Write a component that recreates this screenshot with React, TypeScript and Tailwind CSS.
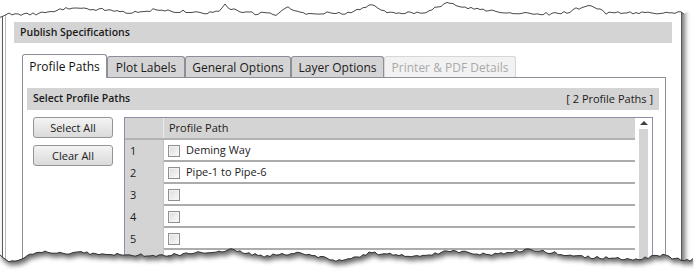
import React from "react";

const rand = (i: number, s: number) => {
  const x = Math.sin(i * 12.9898 + s * 78.233) * 43758.5453;
  return x - Math.floor(x);
};

function tornLine(ctrl: [number, number][], seed: number, amp: number, dy = 0) {
  const pts: [number, number][] = [];
  for (let x = 0; x <= 694; x += 3) {
    let k = 0;
    while (k < ctrl.length - 2 && ctrl[k + 1][0] < x) k++;
    const [x0, y0] = ctrl[k];
    const [x1, y1] = ctrl[k + 1];
    const t = Math.min(1, Math.max(0, (x - x0) / (x1 - x0 || 1)));
    const y = y0 + (y1 - y0) * t + (rand(x, seed) - 0.5) * amp - dy;
    pts.push([x, Math.round(y * 10) / 10]);
  }
  return pts;
}

const topCtrl: [number, number][] = [
  [0, 18], [4, 14], [20, 15], [45, 13], [65, 8], [100, 9], [125, 13], [150, 10], [190, 12], [215, 13], [225, 5], [240, 13], [278, 14], [288, 7], [300, 13], [350, 13], [372, 5], [390, 13], [425, 12], [447, 3], [480, 10], [510, 13], [560, 14], [590, 5], [605, 13], [683, 13], [694, 13],
];
const botCtrl: [number, number][] = [
  [0, 256], [12, 262], [40, 252], [120, 254], [160, 256], [200, 253], [230, 250], [260, 256], [300, 253], [340, 261], [370, 253], [420, 257], [450, 251], [490, 255], [530, 249], [560, 254], [600, 258], [640, 259], [660, 255], [684, 260], [694, 260],
];

function TopTear() {
  const pts = tornLine(topCtrl, 3, 3);
  const line = pts.filter(([x]) => x <= 684).map(([x, y]) => `${x},${y}`).join(" ");
  const fill = `M0,0 L694,0 L694,${pts[pts.length - 1][1]} ` + pts.slice().reverse().map(([x, y]) => `L${x},${y}`).join(" ") + " Z";
  return (
    <svg className="absolute left-0 top-0" width="694" height="24" viewBox="0 0 694 24">
      <path d={fill} fill="#ffffff" />
      <polyline points={line} fill="none" stroke="#4a4a4a" strokeWidth="1" />
    </svg>
  );
}

function BottomTear() {
  const off = 236;
  const pts = tornLine(botCtrl, 7, 3, off);
  const edge = pts.map(([x, y]) => `L${x},${y}`).join(" ");
  const below = `M0,38 L0,${pts[0][1]} ${edge} L694,38 Z`;
  const above = `M0,-20 L0,${pts[0][1]} ${edge} L694,-20 Z`;
  return (
    <svg className="absolute left-0 top-[236px]" width="694" height="38" viewBox="0 0 694 38">
      <defs>
        <clipPath id="belowClip">
          <path d={below} />
        </clipPath>
        <filter id="blur" x="-5%" y="-50%" width="110%" height="200%">
          <feGaussianBlur stdDeviation="2.6" />
        </filter>
      </defs>
      <path d={below} fill="#ffffff" />
      <g clipPath="url(#belowClip)">
        <path d={above} fill="#000" opacity="0.6" filter="url(#blur)" transform="translate(2,4)" />
      </g>
      <polyline points={pts.map(([x, y]) => `${x},${y}`).join(" ")} fill="none" stroke="#333" strokeWidth="1" />
    </svg>
  );
}

function Checkbox() {
  return <span className="block h-[12px] w-[12px] border border-[#8f8f8f] bg-gradient-to-br from-[#dcdcdc] to-[#fbfbfb] shadow-[inset_0_0_0_1px_#f4f4f4]" />;
}

const tabs = [
  { label: "Plot Labels", w: "w-[78px]" },
  { label: "General Options", w: "w-[106px]" },
  { label: "Layer Options", w: "w-[93px]" },
];

const rows = ["Deming Way", "Pipe-1 to Pipe-6", "", "", "", ""];

export default function App() {
  return (
    <div className="relative h-[274px] w-[694px] overflow-hidden bg-white font-['Open_Sans',sans-serif] text-[11px] text-[#1b1b1b]">
      <div className="ml-[2px] h-[274px] w-[680px] border-l border-r border-[#5a5a5a] bg-white shadow-[3px_2px_5px_rgba(0,0,0,0.55)]">
        <div className="ml-[2px] h-full border-l border-[#b8b8b8] pt-[22px]">
          <div className="ml-[8px] flex h-[21px] w-[658px] items-center bg-[#d4d4d4] pl-[6px] text-[10.5px] font-semibold">
            Publish Specifications
          </div>

          <div className="ml-[16px] mt-[11px] flex h-[23px] items-end">
            <div className="relative z-10 -mb-px flex h-[24px] w-[85px] items-center justify-center rounded-t-[3px] border border-b-0 border-[#8c8e98] bg-white text-[12px] leading-none text-[#111]">
              Profile Paths
            </div>
            {tabs.map((t) => (
              <div
                key={t.label}
                className={`${t.w} flex h-[21px] items-center justify-center rounded-t-[3px] border border-b-0 border-[#8c8e98] bg-[#d4d4d4] pt-px text-[12px] leading-none`}
              >
                {t.label}
              </div>
            ))}
            <div className="flex h-[21px] w-[132px] items-center justify-center rounded-t-[3px] border border-b-0 border-[#d6d6d6] bg-[#f2f2f2] pt-px text-[12px] leading-none text-[#a9a9a9]">
              Printer &amp; PDF Details
            </div>
          </div>

          <div className="ml-[16px] h-[200px] w-[644px] border-l border-r border-t border-[#8c8e98] pl-[4px] pt-[10px]">
            <div className="flex h-[22px] w-[632px] items-center justify-between bg-[#d4d4d4] px-[6px]">
              <span className="text-[10.5px] font-semibold">Select Profile Paths</span>
              <span>[ 2 Profile Paths ]</span>
            </div>

            <div className="mt-[7px] flex gap-[11px] pl-[6px]">
              <div className="flex flex-col gap-[7px]">
                {["Select All", "Clear All"].map((b) => (
                  <button
                    key={b}
                    className="h-[21px] w-[80px] rounded-[3px] border border-[#959595] bg-gradient-to-b from-[#f4f4f4] to-[#dadada] text-[11px] leading-none text-[#1b1b1b]"
                  >
                    {b}
                  </button>
                ))}
              </div>

              <div className="flex w-[529px] border-l border-r border-t border-[#8d8fa6]">
                <div className="flex-1">
                  <div className="flex h-[22px] border-b-2 border-[#b3b3b3]">
                    <div className="w-[39px] border-r border-[#ececec] bg-[#d4d4d4]" />
                    <div className="flex flex-1 items-center bg-[#d4d4d4] pl-[5px]">Profile Path</div>
                  </div>
                  {rows.map((r, i) => (
                    <div key={i} className="flex h-[22px]">
                      <div className="flex w-[39px] items-center border-r border-[#c4c4c4] bg-[#d4d4d4] pl-[5px] pt-[1px]">{i + 1}</div>
                      <div className="flex flex-1 items-center gap-[6px] border-b-2 border-[#acacac] bg-white pl-[4px] pt-[1px]">
                        <Checkbox />
                        {r && <span>{r}</span>}
                      </div>
                    </div>
                  ))}
                </div>
                <div className="flex w-[17px] flex-col bg-white">
                  <div className="flex h-[11px] items-center justify-center">
                    <svg width="8" height="5" viewBox="0 0 8 5">
                      <path d="M0,4 L4,0 L8,4 Z" fill="#404040" />
                    </svg>
                  </div>
                  <div className="ml-[4px] h-[150px] w-[9px] bg-[#d4d4d4]" />
                </div>
              </div>
            </div>
          </div>
        </div>
      </div>
      <TopTear />
      <BottomTear />
    </div>
  );
}
